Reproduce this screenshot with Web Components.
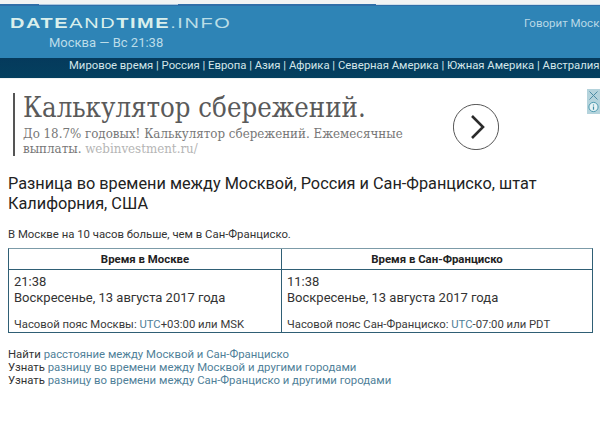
<!DOCTYPE html>
<html>
<head>
<meta charset="utf-8">
<style>
  html, body { margin: 0; padding: 0; background: #fff; overflow: hidden; }
  body { width: 600px; height: 433px; font-family: Roboto, sans-serif; color: #222; }
</style>
</head>
<body>
<site-header></site-header>
<ad-banner></ad-banner>
<tz-page></tz-page>

<script>
class SiteHeader extends HTMLElement {
  constructor() {
    super();
    this.attachShadow({ mode: "open" }).innerHTML = `<style>
      :host { display: block; height: 79px; background: #f1f3f3; padding-top: 4px; box-sizing: border-box; }
      .line { height: 2px; background: #2f6ea8; display: flex; }
      .line i { display: block; margin-left: 39px; width: 139px; height: 1px; background: #a9c6de; }
      .line b { display: block; margin-left: 198px; flex: 1; height: 1px; background: #cfdfe9; }
      .top { height: 52px; background: #2e84b6; display: flex; justify-content: space-between; overflow: hidden; }
      .logo { padding: 9px 0 0 10px; }
      .brand { font: 15px/16px "Liberation Sans", sans-serif; letter-spacing: 1.2px; color: #d9efec;
        width: 170px; white-space: nowrap; transform: scaleX(1.33); transform-origin: left; }
      .brand span { color: #b9dde6; }
      .brand b { font-weight: bold; }
      .clock { font-size: 13px; line-height: 16px; color: #bcdde9; margin: 4px 0 0 39px; }
      .lang { font-size: 11.5px; color: #b8d8e6; padding-top: 10px; width: 76px; white-space: nowrap; flex: none; }
      nav { height: 20px; background: linear-gradient(#053a5c, #04405f); color: #d3e6ea; font-size: 11.3px; line-height: 15px;
        padding-left: 69px; white-space: nowrap; overflow: hidden; }
    </style>
    <div class="line"><i></i><b></b></div>
    <div class="top">
      <div class="logo">
        <div class="brand"><b>DATE</b>AND<b>TIME</b><span>.INFO</span></div>
        <div class="clock">Москва — Вс 21:38</div>
      </div>
      <div class="lang">Говорит Моск</div>
    </div>
    <nav>Мировое время | Россия | Европа | Азия | Африка | Северная Америка | Южная Америка | Австралия</nav>`;
  }
}

class AdBanner extends HTMLElement {
  constructor() {
    super();
    this.attachShadow({ mode: "open" }).innerHTML = `<style>
      :host { display: flex; height: 70px; margin-top: 14px; position: relative; padding-left: 13px; }
      .copy { border-left: 2px solid #555; height: 63px; padding-left: 8px; width: 410px; flex: none; font-family: "DejaVu Serif", serif; color: #5a5a5a; }
      h2 { margin: 0; font-size: 27.3px; font-weight: normal; font-stretch: condensed; line-height: 30px; white-space: nowrap; }
      p { margin: 3px 0 0; font-size: 13.2px; line-height: 15px; color: #777; font-family: "DejaVu Serif Condensed", "DejaVu Serif", serif; }
      p span { color: #b5b5b5; }
      .go { margin: 11px 0 0 20px; width: 46px; height: 46px; flex: none; }
      .close { position: absolute; right: 0; top: -4px; width: 13px; height: 25px; }
    </style>
    <div class="copy">
      <h2>Калькулятор сбережений.</h2>
      <p>До 18.7% годовых! Калькулятор сбережений. Ежемесячные<br>выплаты. <span>webinvestment.ru/</span></p>
    </div>
    <svg class="go" viewBox="0 0 46 46"><circle cx="23" cy="23" r="22.6" fill="#fff" stroke="#444" stroke-width=".9"/><path d="M19 12 L30 23 L19 34" fill="none" stroke="#2b2b2b" stroke-width="2.6"/></svg>
    <svg class="close" viewBox="0 0 13 25">
      <rect width="13" height="25" fill="#b4d3dc"/>
      <path d="M2.5 2.5 L10.5 10.5 M10.5 2.5 L2.5 10.5" stroke="#4c8ca4" stroke-width="1"/>
      <circle cx="6.5" cy="18" r="4.6" fill="#e7f3f5" stroke="#4c9ab0"/>
      <path d="M6.5 15.5v1M6.5 17.5v3.2" stroke="#3f8ea6" stroke-width="1.2"/>
    </svg>`;
  }
}

class TzCard extends HTMLElement {
  constructor() {
    super();
    this.attachShadow({ mode: "open" }).innerHTML = `<style>
      :host { display: flex; flex-direction: column; min-width: 0; }
      :host(:not(:first-child)) { border-left: 1px solid #2f5f75; }
      .head { height: 20px; border-bottom: 1px solid #2f5f75; text-align: center; font-size: 11.4px; font-weight: 700; line-height: 20px; color: #222; }
      .body { padding: 4px 5px 0; font-size: 13px; line-height: 16px; color: #333; }
      .zone { margin-top: 12px; font-size: 11.3px; line-height: 14px; color: #3a3a3a; white-space: nowrap; }
      ::slotted(a) { color: #47758f; text-decoration: none; }
    </style>
    <div class="head"><slot name="title"></slot></div>
    <div class="body">
      <div><slot name="time"></slot></div>
      <div><slot name="date"></slot></div>
      <div class="zone"><slot></slot></div>
    </div>`;
  }
}

class TzPage extends HTMLElement {
  constructor() {
    super();
    this.attachShadow({ mode: "open" }).innerHTML = `<style>
      :host { display: block; padding: 0 8px; }
      h1 { margin: 11px 0 0; font-size: 16.3px; font-weight: 400; line-height: 20px; color: #222; height: 40px; white-space: nowrap; }
      .diff { margin: 13px 0 0; font-size: 11.35px; line-height: 14px; color: #333; }
      .grid { display: grid; grid-template-columns: 272px 1fr; margin-top: 7px; height: 85px; box-sizing: border-box; width: 585px;
        border: 1px solid #2f5f75; border-top-color: #7c9ba8; }
      .links { margin-top: 15px; font-size: 11.35px; line-height: 13px; color: #333; white-space: nowrap; }
      a { color: #4f7f99; text-decoration: none; }
    </style>
    <h1>Разница во времени между Москвой, Россия и Сан-Франциско, штат<br>Калифорния, США</h1>
    <p class="diff">В Москве на 10 часов больше, чем в Сан-Франциско.</p>
    <div class="grid">
      <tz-card>
        <span slot="title">Время в Москве</span>
        <span slot="time">21:38</span>
        <span slot="date">Воскресенье, 13 августа 2017 года</span>
        Часовой пояс Москвы: <a href="#">UTC</a>+03:00 или MSK
      </tz-card>
      <tz-card>
        <span slot="title">Время в Сан-Франциско</span>
        <span slot="time">11:38</span>
        <span slot="date">Воскресенье, 13 августа 2017 года</span>
        Часовой пояс Сан-Франциско: <a href="#">UTC</a>-07:00 или PDT
      </tz-card>
    </div>
    <div class="links">
      <div>Найти <a href="#">расстояние между Москвой и Сан-Франциско</a></div>
      <div>Узнать <a href="#">разницу во времени между Москвой и другими городами</a></div>
      <div>Узнать <a href="#">разницу во времени между Сан-Франциско и другими городами</a></div>
    </div>`;
  }
}

window.customElements.define("site-header", SiteHeader);
window.customElements.define("ad-banner", AdBanner);
window.customElements.define("tz-card", TzCard);
window.customElements.define("tz-page", TzPage);
</script>
</body>
</html>
